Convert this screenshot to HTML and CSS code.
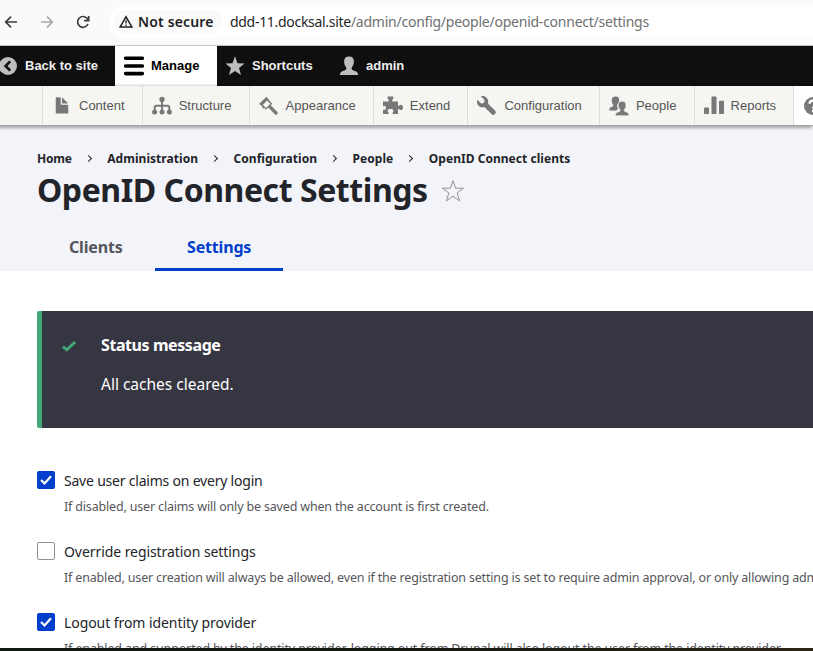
FILE: index.html
```
<!DOCTYPE html>
<html lang="en">
<head>
    <meta charset="UTF-8">
    <meta name="viewport" content="width=device-width, initial-scale=1.0">
    <title>OpenID Connect Settings</title>
    <link rel="stylesheet" href="styles.css">
</head>
<body>

    <!-- browser bar -->
    <div class="browser">
        <svg class="nav" width="16" height="16" viewBox="0 0 16 16"><path d="M14 8H3M8 2.7L2.7 8 8 13.3"/></svg>
        <svg class="nav dim" width="16" height="16" viewBox="0 0 16 16"><path d="M2 8h11M8 2.7L13.3 8 8 13.3"/></svg>
        <svg class="nav" width="16" height="16" viewBox="0 0 16 16"><path d="M13 10A5.4 5.4 0 1 1 12.3 4.6L13.6 6M13.7 2v4.6H9.1"/></svg>
        <div class="address">
            <div class="chip">
                <svg width="14" height="14" viewBox="0 0 14 14"><path d="M7 1.8L1.2 12h11.6z" fill="none" stroke="#1f1f1f" stroke-width="1.5"/><path d="M7 5.3v3.2M7 9.4v1.3" stroke="#1f1f1f" stroke-width="1.3"/></svg>
                <span>Not secure</span>
            </div>
            <div class="url"><span class="host">ddd-11.docksal.site</span><span class="path">/admin/config/people/openid-connect/settings</span></div>
        </div>
    </div>

    <!-- toolbar -->
    <nav class="toolbar">
        <a class="tab back">
            <svg width="20" height="20" viewBox="0 0 20 20"><circle cx="10" cy="10" r="9" fill="#bebebe"/><path d="M12.2 5.4L7.6 10l4.6 4.6" fill="none" stroke="#0f0f0f" stroke-width="2.6"/></svg>
            Back to site
        </a>
        <a class="tab manage">
            <svg width="20" height="20" viewBox="0 0 20 20"><path d="M1.7 2.2h16.6M1.7 10h16.6M1.7 17.6h16.6" stroke="#000" stroke-width="3.6" stroke-linecap="round"/></svg>
            Manage
        </a>
        <a class="tab shortcuts">
            <svg width="20" height="20" viewBox="0 0 20 20"><path fill="#bebebe" d="M10 .3l2.5 6.9 7 .3-5.5 4.4 2 7.2-6-4.1-6 4.1 2-7.2L.5 7.5l7-.3z"/></svg>
            Shortcuts
        </a>
        <a class="tab user">
            <svg width="20" height="20" viewBox="0 0 20 20"><path fill="#bebebe" d="M10 .6c3.300 0 4.900 2 4.900 4.900 0 2.600-.9 4.600-2.200 6v1.600c0 .8 1.400 1.200 3.300 1.900 2 .7 3 1.700 3.200 4H.8c.2-2.300 1.200-3.300 3.200-4 1.900-.7 3.300-1.100 3.300-1.900v-1.600c-1.300-1.400-2.200-3.400-2.200-6C5.100 2.600 6.700.6 10 .6z"/></svg>
            admin
        </a>
    </nav>
    <nav class="tray">
        <a class="item">
            <svg width="20" height="20" viewBox="0 0 16 16"><path d="M12.502 7h-5c-.276 0-.502-.225-.502-.5v-5c0-.275-.225-.5-.5-.5h-3c-.275 0-.5.225-.5.5v12.029c0 .275.225.5.5.5h9c.275 0 .5-.225.5-.5v-6.029c0-.275-.225-.5-.498-.5zM8.502 6h4c.275 0 .34-.159.146-.354l-4.293-4.292c-.195-.195-.353-.129-.353.146v4c0 .275.225.5.5.5z"/></svg>
            Content
        </a>
        <a class="item">
            <svg width="20" height="20" viewBox="0 0 20 20"><circle cx="10" cy="3.400" r="2.600"/><circle cx="2.600" cy="16" r="2.500"/><circle cx="10" cy="16" r="2.500"/><circle cx="17.400" cy="16" r="2.500"/><path d="M10 4v11M2.700 15v-3.500q0-1.700 1.700-1.700h11.200q1.700 0 1.700 1.700V15" fill="none" stroke="#787878" stroke-width="1.900"/></svg>
            Structure
        </a>
        <a class="item">
            <svg width="20" height="20" viewBox="0 0 20 20"><path d="M7.500.8L0 8l2.500 1.600 1.800 3.200 7-7z"/><path d="M8 3.500l4.400 4.200-5.400 5.200-4-4z" fill="#f5f5f2" stroke="#787878" stroke-width="1.300"/><path d="M10.700 10.700L17 17" stroke="#787878" stroke-width="3.300" stroke-linecap="round"/></svg>
            Appearance
        </a>
        <a class="item">
            <svg width="20" height="20" viewBox="0 0 20 20"><path d="M0 5.500h5.700V3.800C4.200 2.700 4.300.6 5.200.6h4.600c.9 0 1 2.100-.5 3.200v1.700H15v4.300h1.100c.7-1.600 3.900-1.700 3.900 1.600s-3.200 3.200-3.900 1.600H15v5H9.600v-1.700c1.600-1.200 1-3.400-2-3.400s-3.700 2.200-2.100 3.400V18H0v-4.500c2.200 1 3-.2 3-1.600S2.200 9.300 0 10.300z"/></svg>
            Extend
        </a>
        <a class="item">
            <svg width="20" height="20" viewBox="0 0 16 16"><path d="M14.416 11.586l-5.666-5.664c.15-.449.252-.921.252-1.421C9.002 2.016 6.986 0 4.500 0c-.505 0-.981.102-1.434.255l2.431 2.431c.588.588.588 2.225 0 2.812-.588.588-2.225.588-2.812 0L.254 3.067A4.500 4.500 0 0 0 0 4.500C0 6.986 2.015 9.001 4.500 9.001c.5 0 .972-.102 1.421-.251l5.666 5.666a2 2 0 0 0 2.829-2.830z"/></svg>
            Configuration
        </a>
        <a class="item">
            <svg width="20" height="20" viewBox="0 0 20 20"><path d="M6.500.5c2.700 0 3.700 1.600 3.700 3.700 0 1-.3 2-.9 2.900-1.300 1.300-1.700 3.500-.4 5.700l-1.500 1.700H.3c0-2.600 1-3.200 2.700-3.700 1.200-.4 1.600-.8 1.400-1.700C3.300 7.900 2.800 6.200 2.800 4.200 2.800 1.800 4 .5 6.500.5z"/><path d="M13.200 5.300c2.700 0 3.800 1.500 3.800 3.800 0 1.900-.6 3.500-1.800 4.600v1c0 .5.800.8 2.200 1.300 1.700.6 2.500 1.600 2.600 3.700H6.300c.1-2.100.9-3.100 2.600-3.700 1.400-.5 2.200-.8 2.200-1.300v-1c-1.200-1.100-1.800-2.700-1.800-4.600 0-2.300 1.100-3.800 3.900-3.800z" stroke="#f5f5f2" stroke-width=".6"/></svg>
            People
        </a>
        <a class="item">
            <svg width="20" height="20" viewBox="0 0 20 20"><rect x="0" y="11.500" width="5" height="6.500" rx=".8"/><rect x="7.500" y=".5" width="5" height="17.500" rx=".8"/><rect x="15" y="4.700" width="5" height="13.300" rx=".8"/></svg>
            Reports
        </a>
        <a class="item help">
            <svg width="20" height="20" viewBox="0 0 20 20"><circle cx="10" cy="10" r="9"/><path d="M6.600 7.700C6.600 3.700 13.400 3.700 13.400 7.600c0 2.500-3.300 2.300-3.300 4.800M10.100 13.800v2.400" fill="none" stroke="#fff" stroke-width="2.300"/></svg>
        </a>
    </nav>

    <header class="header">
        <ol class="breadcrumb">
            <li>Home</li>
            <li>Administration</li>
            <li>Configuration</li>
            <li>People</li>
            <li>OpenID Connect clients</li>
        </ol>
        <div class="title">
            <h1>OpenID Connect Settings</h1>
            <svg width="24" height="24" viewBox="0 0 24 24"><path d="M12 1.700l2.600 7.500h8l-6.400 4.700 2.400 8L12 17.200l-6.600 4.700 2.400-8L1.400 9.200h8z" fill="none" stroke="#919297" stroke-width="1"/></svg>
        </div>
        <div class="tabs">
            <a class="clients">Clients</a>
            <a class="settings">Settings</a>
        </div>
    </header>

    <main>
        <div class="message">
            <svg width="16" height="16" viewBox="0 0 16 16"><path d="M2 8.500l3.700 3.300L14.200 4" fill="none" stroke="#42a877" stroke-width="3"/></svg>
            <div>
                <h2>Status message</h2>
                <p>All caches cleared.</p>
            </div>
        </div>

        <form>
            <div class="field claims">
                <span class="box checked"><svg width="18" height="18" viewBox="0 0 18 18"><path d="M4 9l3.500 3.400L14 5.300"/></svg></span>
                <div>
                    <label>Save user claims on every login</label>
                    <p>If disabled, user claims will only be saved when the account is first created.</p>
                </div>
            </div>
            <div class="field override">
                <span class="box"></span>
                <div>
                    <label>Override registration settings</label>
                    <p>If enabled, user creation will always be allowed, even if the registration setting is set to require admin approval, or only allowing administrators.</p>
                </div>
            </div>
            <div class="field logout">
                <span class="box checked"><svg width="18" height="18" viewBox="0 0 18 18"><path d="M4 9l3.500 3.400L14 5.300"/></svg></span>
                <div>
                    <label>Logout from identity provider</label>
                    <p>If enabled and supported by the identity provider, logging out from Drupal will also logout the user from the identity provider.</p>
                </div>
            </div>
        </form>
    </main>
    <div class="edge"></div>

</body>
</html>
```
FILE: styles.css
```
* {
    box-sizing: border-box;
}

body {
    margin: 0;
    height: 651px;
    overflow: hidden;
    display: flex;
    flex-direction: column;
    background: #fff;
    color: #232429;
    font-family: "Noto Sans", sans-serif;
    white-space: nowrap;
}

h1, h2, p, ol {
    margin: 0;
    padding: 0;
}

svg {
    display: block;
    flex: none;
}

/* browser bar */
.browser {
    display: flex;
    align-items: center;
    flex: none;
    height: 46px;
    padding: 0 0 2px 3px;
    gap: 20px;
    background: #fafafa;
    border-bottom: 1px solid #c4c4c4;
}

.nav {
    fill: none;
    stroke: #3c3c3c;
    stroke-width: 1.7;
}

.dim {
    stroke: #a9a9a9;
}

.address {
    display: flex;
    align-items: center;
    flex: 1;
    height: 34px;
    margin-left: -2px;
    padding-left: 5px;
    background: #fff;
    border-radius: 17px 0 0 17px;
}

.chip {
    display: flex;
    align-items: center;
    gap: 5px;
    width: 108px;
    height: 24px;
    padding-left: 5px;
    border-radius: 12px;
    background: #fafafa;
    color: #1f1f1f;
    font-size: 14px;
    font-weight: 600;
    letter-spacing: 0.15px;
}

.url {
    margin-left: 8px;
    font-size: 14px;
}

.host {
    color: #1f1f1f;
    letter-spacing: -0.3px;
}

.path {
    color: #6f6f6f;
    letter-spacing: -0.24px;
}

/* toolbar */
.toolbar {
    display: flex;
    flex: none;
    height: 40px;
    background: #0f0f0f;
    font: bold 13px "Liberation Sans", Arial, sans-serif;
}

.tab {
    display: flex;
    align-items: center;
    gap: 7px;
    color: #fff;
    padding: 0 0 1px 8px;
}

.back {
    width: 115px;
    padding-left: 0;
    margin-left: -2px;
}

.back, .shortcuts, .user {
    color: #eee;
}

.manage {
    width: 102px;
    padding-left: 9px;
    margin-left: 2px;
    background: #fff;
    color: #000;
}

.shortcuts {
    width: 114px;
}

.tray {
    position: relative;
    display: flex;
    flex: none;
    height: 40px;
    padding-left: 42px;
    background: #f5f5f2;
    border-bottom: 1px solid #a6a6a6;
    box-shadow: -2px 1px 3px 1px rgba(0, 0, 0, 0.33);
    font: 13px "Liberation Sans", Arial, sans-serif;
}

.item {
    display: flex;
    align-items: center;
    flex: none;
    gap: 7px;
    padding: 0 17.15px 0 9px;
    border-left: 1px solid #ddd;
    color: #565656;
    fill: #787878;
}

.help {
    width: 60px;
    background: #fff;
}

/* page header */
.header {
    flex: none;
    height: 145px;
    padding: 25px 37px 0;
    background: #f3f4f9;
}

.breadcrumb {
    display: flex;
    list-style: none;
    height: 16px;
    line-height: 16px;
    font-size: 12px;
    font-weight: 700;
    letter-spacing: 0.04px;
}

.breadcrumb li + li::before {
    content: "";
    display: inline-block;
    width: 4px;
    height: 4px;
    margin: 0 16.5px 2px 14px;
    border: solid #232429;
    border-width: 1.2px 1.2px 0 0;
    transform: rotate(45deg);
}

.breadcrumb li:first-child {
    letter-spacing: -0.2px;
}

.title {
    display: flex;
    align-items: center;
    height: 46px;
    gap: 13px;
}

.title svg {
    margin-top: 2px;
}

h1 {
    font-size: 32px;
    line-height: 46px;
    letter-spacing: -0.44px;
}

.tabs {
    display: flex;
    margin-top: 10px;
    font-size: 16px;
    font-weight: 700;
    line-height: 22px;
    letter-spacing: -0.17px;
}

.tabs a {
    height: 48px;
    padding: 13px 32px 0;
    color: #55565b;
}

.tabs .settings {
    width: 128px;
    color: #003ecc;
    border-bottom: 3px solid #003ecc;
}

.clients {
    width: 118px;
}

/* status message */
.message {
    display: flex;
    gap: 24px;
    height: 117px;
    margin: 40px 0 0 37px;
    padding: 23px 0 0 19px;
    border-left: 5px solid #42a877;
    border-radius: 2px 0 0 2px;
    background: #353641;
    color: #fff;
}

.message svg {
    margin-top: 4px;
}

.message h2 {
    font-size: 16px;
    line-height: 22px;
    letter-spacing: -0.42px;
}

.message p {
    margin-top: 17px;
    font-size: 15.5px;
    line-height: 22px;
}

/* settings form */
main {
    flex: 1;
    min-height: 0;
    overflow: hidden;
}

form {
    padding: 43px 0 0 37px;
}

.field {
    display: flex;
    gap: 9px;
    height: 71px;
}

.box {
    width: 18px;
    height: 18px;
    flex: none;
    border: 1px solid #919297;
    border-radius: 2px;
}

.checked {
    border: 0;
    background: #003ecc;
}

.box path {
    fill: none;
    stroke: #fff;
    stroke-width: 2.2;
}

label {
    display: block;
    font-size: 14px;
    line-height: 20px;
    letter-spacing: -0.07px;
}

.claims label {
    letter-spacing: -0.21px;
}

.field p {
    margin-top: 7px;
    font-size: 12.5px;
    line-height: 18px;
    letter-spacing: -0.17px;
    color: #55565b;
}

.logout p {
    letter-spacing: -0.134px;
}

.edge {
    flex: none;
    height: 3px;
    background: linear-gradient(90deg, #111a12, #14180f 50%, #2b2417);
}
```
